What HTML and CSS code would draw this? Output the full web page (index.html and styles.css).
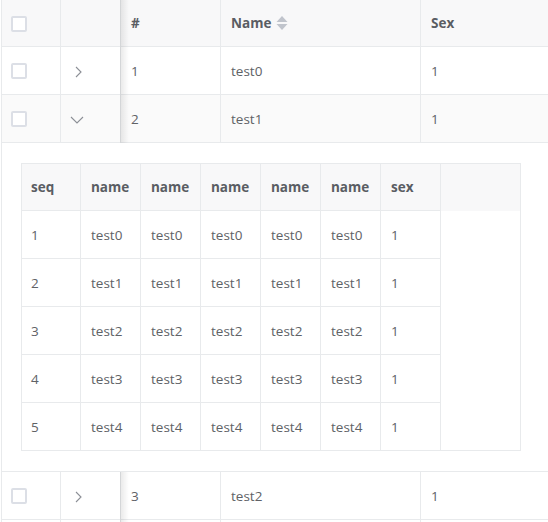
FILE: index.html
```html
<!DOCTYPE html>
<html>
<head>
<meta charset="utf-8">
<link rel="stylesheet" href="styles.css">
</head>
<body>
<div class="grid">
  <div class="row head">
    <div class="cell c1"><span class="cb"></span></div>
    <div class="cell c2 fix"></div>
    <div class="cell c3">#</div>
    <div class="cell c4">Name
      <svg class="sort" width="12" height="16" viewBox="0 0 12 16"><path d="M0.5 7 L6 1 L11.5 7 Z" fill="#c0c4cc"/><path d="M0.5 9 L6 15 L11.5 9 Z" fill="#c0c4cc"/></svg>
    </div>
    <div class="cell c5">Sex</div>
  </div>
  <div class="row">
    <div class="cell c1"><span class="cb"></span></div>
    <div class="cell c2 fix"><svg class="arrow" width="14" height="14" viewBox="0 0 14 14"><path d="M6 2 L11 7 L6 12" fill="none" stroke="#8c8f96" stroke-width="1.1"/></svg></div>
    <div class="cell c3">1</div>
    <div class="cell c4">test0</div>
    <div class="cell c5">1</div>
  </div>
  <div class="row alt">
    <div class="cell c1"><span class="cb"></span></div>
    <div class="cell c2 fix"><svg class="arrow" width="14" height="14" viewBox="0 0 14 14"><path d="M1 4 L7 10 L13 4" fill="none" stroke="#8c8f96" stroke-width="1.1"/></svg></div>
    <div class="cell c3">2</div>
    <div class="cell c4">test1</div>
    <div class="cell c5">1</div>
  </div>
  <div class="expand">
    <div class="sub">
      <div class="srow shead">
        <div class="scell s1">seq</div><div class="scell">name</div><div class="scell">name</div><div class="scell">name</div><div class="scell">name</div><div class="scell">name</div><div class="scell">sex</div><div class="gutter"></div>
      </div>
      <div class="srow">
        <div class="scell s1">1</div><div class="scell">test0</div><div class="scell">test0</div><div class="scell">test0</div><div class="scell">test0</div><div class="scell">test0</div><div class="scell">1</div><div class="gutter"></div>
      </div>
      <div class="srow">
        <div class="scell s1">2</div><div class="scell">test1</div><div class="scell">test1</div><div class="scell">test1</div><div class="scell">test1</div><div class="scell">test1</div><div class="scell">1</div><div class="gutter"></div>
      </div>
      <div class="srow">
        <div class="scell s1">3</div><div class="scell">test2</div><div class="scell">test2</div><div class="scell">test2</div><div class="scell">test2</div><div class="scell">test2</div><div class="scell">1</div><div class="gutter"></div>
      </div>
      <div class="srow">
        <div class="scell s1">4</div><div class="scell">test3</div><div class="scell">test3</div><div class="scell">test3</div><div class="scell">test3</div><div class="scell">test3</div><div class="scell">1</div><div class="gutter"></div>
      </div>
      <div class="srow last">
        <div class="scell s1">5</div><div class="scell">test4</div><div class="scell">test4</div><div class="scell">test4</div><div class="scell">test4</div><div class="scell">test4</div><div class="scell">1</div><div class="gutter"></div>
      </div>
    </div>
  </div>
  <div class="row">
    <div class="cell c1"><span class="cb"></span></div>
    <div class="cell c2 fix"><svg class="arrow" width="14" height="14" viewBox="0 0 14 14"><path d="M6 2 L11 7 L6 12" fill="none" stroke="#8c8f96" stroke-width="1.1"/></svg></div>
    <div class="cell c3">3</div>
    <div class="cell c4">test2</div>
    <div class="cell c5">1</div>
  </div>
  <div class="row">
    <div class="cell c1"></div>
    <div class="cell c2 fix"></div>
    <div class="cell c3"></div>
    <div class="cell c4"></div>
    <div class="cell c5"></div>
  </div>
</div>
</body>
</html>
```

FILE: styles.css
```css
html, body {
  margin: 0;
  padding: 0;
  background: #fff;
  overflow: hidden;
}
body {
  font-family: "Open Sans", "Noto Sans", sans-serif;
  font-size: 13.5px;
  color: #606266;
}
.grid {
  margin-left: 1px;
  border-left: 1px solid #e8eaec;
  width: 619px;
}
.row {
  display: flex;
  height: 48px;
  box-sizing: border-box;
  border-bottom: 1px solid #e8eaec;
  background: #fff;
}
.row.head {
  height: 47px;
  background: #f8f8f9;
  font-weight: 700;
  color: #5a5d63;
}
.row.alt {
  background: #fafafa;
}
.cell {
  box-sizing: border-box;
  border-right: 1px solid #e8eaec;
  display: flex;
  align-items: center;
  padding-left: 10px;
  flex: none;
}
.c1 { width: 59px; padding-left: 9px; }
.c2 { width: 60px; padding-left: 9px; }
.c3 { width: 100px; }
.c4 { width: 200px; }
.c5 { width: 200px; }
.fix {
  position: relative;
}
.fix::after {
  content: "";
  position: absolute;
  top: 0;
  bottom: -1px;
  left: 100%;
  width: 9px;
  background: linear-gradient(to right, rgba(0, 0, 0, 0.09), rgba(0, 0, 0, 0));
  z-index: 2;
}
.cb {
  display: block;
  width: 16px;
  height: 16px;
  box-sizing: border-box;
  border: 2px solid #dcdfe6;
  border-radius: 2px;
  background: #fff;
  margin-top: 1px;
}
.arrow {
  display: block;
  margin-top: 3px;
}
.sort {
  display: block;
  margin-left: 5px;
  margin-top: -1px;
}
.expand {
  box-sizing: border-box;
  padding: 20px 0 20px 19px;
  border-bottom: 1px solid #e8eaec;
  background: #fff;
}
.sub {
  width: 500px;
  box-sizing: border-box;
  border: 1px solid #e8eaec;
}
.srow {
  display: flex;
  height: 48px;
}
.srow.shead {
  height: 47px;
  background: #f8f8f9;
  font-weight: 700;
  color: #5a5d63;
}
.srow.last {
  height: 47px;
}
.scell {
  flex: none;
  width: 60px;
  box-sizing: border-box;
  border-right: 1px solid #e8eaec;
  border-bottom: 1px solid #e8eaec;
  display: flex;
  align-items: center;
  padding-left: 10px;
}
.scell.s1 {
  width: 59px;
  padding-left: 9px;
}
.srow.last .scell {
  border-bottom: none;
}
.gutter {
  flex: 1;
}
```
